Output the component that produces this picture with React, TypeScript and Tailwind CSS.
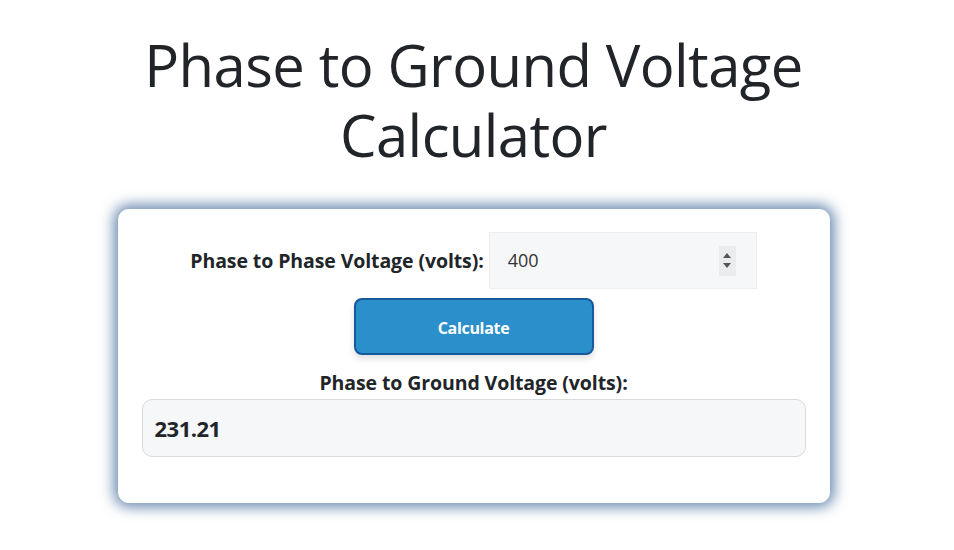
import React from "react";

export default function App() {
  return (
    <div
      className="min-h-[550px] bg-white flex flex-col items-center text-[#212529] pr-[7px]"
      style={{ fontFamily: '"Open Sans", "Noto Sans", sans-serif' }}
    >
      <h1 className="mt-[30px] text-[58px] leading-[70px] font-normal text-center w-[740px] tracking-[-0.6px]">
        Phase to Ground Voltage Calculator
      </h1>
      <div className="mt-[39px] w-[712px] h-[294px] bg-white rounded-[11px] shadow-[0_0_14px_4px_rgba(65,105,155,0.8)] px-[24px] pt-[23px] flex flex-col items-center">
        <div className="flex items-center gap-[5px]">
          <label className="text-[19.5px] font-bold tracking-[-0.1px]">Phase to Phase Voltage (volts):</label>
          <div className="w-[268px] h-[57px] bg-[#f6f7f9] border border-[#eceef0] flex items-center pl-[18px] pr-[20px]">
            <input
              type="text"
              defaultValue="400"
              className="flex-1 min-w-0 bg-transparent outline-none text-[18px] text-[#333]"
            />
            <div className="w-[17px] h-[30px] bg-[#eaecee] flex flex-col items-center justify-center gap-[5px]">
              <div className="w-0 h-0 border-l-[4px] border-r-[4px] border-b-[5px] border-l-transparent border-r-transparent border-b-[#555]" />
              <div className="w-0 h-0 border-l-[4px] border-r-[4px] border-t-[5px] border-l-transparent border-r-transparent border-t-[#555]" />
            </div>
          </div>
        </div>
        <button className="mt-[9px] w-[240px] h-[57px] rounded-[8px] bg-[#2a8fca] border-2 border-[#175a9c] text-white text-[16px] font-bold shadow-[0_4px_6px_rgba(0,0,0,0.12)] tracking-[-0.3px] pt-[2px]">
          Calculate
        </button>
        <div className="mt-[16px] text-[19.5px] font-bold tracking-[-0.1px] leading-[24px]">
          Phase to Ground Voltage (volts):
        </div>
        <div className="mt-[4px] w-full h-[58px] rounded-[10px] bg-[#f6f7f9] border border-[#d8dbde] flex items-center px-[12px]">
          <span className="text-[22px] font-bold tracking-[-0.5px]">231.21</span>
        </div>
      </div>
    </div>
  );
}
